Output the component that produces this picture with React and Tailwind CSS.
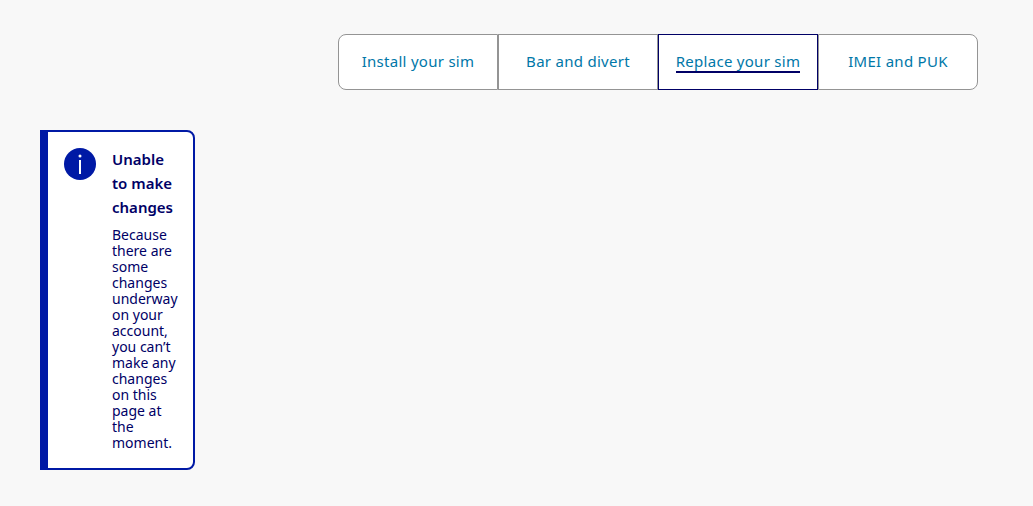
import React from "react";

const tabs = [
  { label: "Install your sim", className: "rounded-l-lg border-[#949494]" },
  { label: "Bar and divert", className: "border-[#949494]" },
  { label: "Replace your sim", active: true, className: "border-[#000066]" },
  { label: "IMEI and PUK", className: "rounded-r-lg border-[#949494]" },
];

export default function App() {
  return (
    <div className="min-h-[506px] bg-[#f8f8f8] px-10 pt-[34px] font-['Noto_Sans',sans-serif]">
      <div className="flex justify-end pr-[15px]">
        {tabs.map((tab) => (
          <a
            key={tab.label}
            className={`flex h-14 w-40 items-center justify-center border bg-white pb-px text-[15px] tracking-[0.28px] text-[#0077a8] ${tab.className}`}
          >
            <span className={tab.active ? "-mb-px border-b-2 border-[#000066] leading-[20px]" : ""}>
              {tab.label}
            </span>
          </a>
        ))}
      </div>

      <div className="mt-10 flex w-[155px] rounded-r-lg border-y-2 border-r-2 border-l-8 border-[#0019a5] bg-white pt-[15px] pb-[17px]">
        <div className="mt-px ml-4 flex h-8 w-8 shrink-0 items-center justify-center rounded-full bg-[#0019a5]">
          <svg width="6" height="22" viewBox="0 0 6 22" fill="#ffffff">
            <circle cx="3" cy="3" r="1.5" />
            <rect x="2" y="7" width="2" height="14" />
          </svg>
        </div>
        <div className="ml-4 w-[66px] shrink-0 text-[#000066]">
          <h3 className="text-[15px] font-semibold leading-6">Unable to make changes</h3>
          <p className="mt-2 text-[14px] leading-4">
            Because there are some changes underway on your account, you can’t make any changes on this page at the moment.
          </p>
        </div>
      </div>
    </div>
  );
}
